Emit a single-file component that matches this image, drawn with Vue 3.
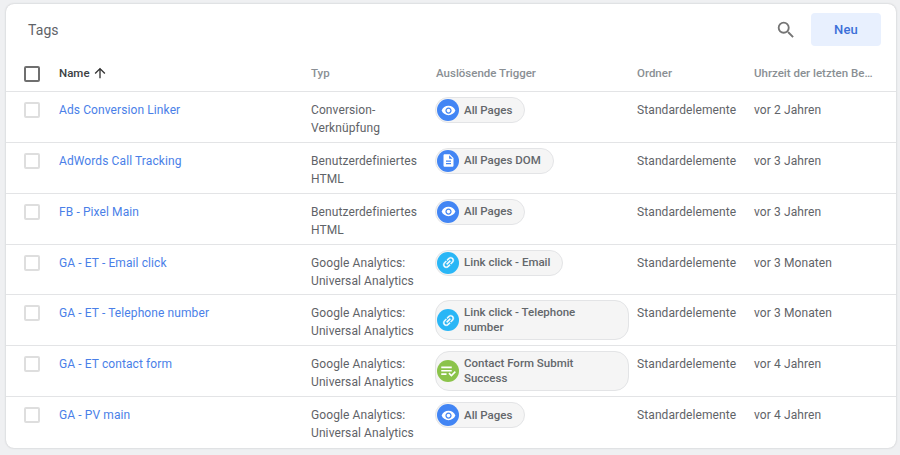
<template>
  <div class="page">
    <div class="card">
      <div class="toolbar">
        <div class="heading">Tags</div>
        <div class="actions">
          <svg class="search" viewBox="0 0 24 24" width="22" height="22">
            <path fill="#757575" d="M15.5 14h-.79l-.28-.27A6.47 6.47 0 0 0 16 9.5 6.5 6.5 0 1 0 9.5 16c1.61 0 3.09-.59 4.23-1.57l.27.28v.79l5 4.99L20.49 19l-4.99-5zm-6 0C7.01 14 5 11.99 5 9.5S7.01 5 9.5 5 14 7.01 14 9.5 11.99 14 9.5 14z" />
          </svg>
          <button class="new-btn">Neu</button>
        </div>
      </div>

      <div class="row head">
        <div class="check-cell"><span class="box box-head"></span></div>
        <div class="name-head">
          Name
          <svg viewBox="0 0 24 24" width="16" height="16">
            <path fill="#333" d="M4 12l1.41 1.41L11 7.83V20h2V7.83l5.58 5.59L20 12l-8-8-8 8z" />
          </svg>
        </div>
        <div>Typ</div>
        <div>Auslösende Trigger</div>
        <div>Ordner</div>
        <div class="ellipsis">Uhrzeit der letzten Bearbeitung</div>
      </div>

      <div v-for="tag in tags" :key="tag.name" class="row">
        <div class="check-cell"><span class="box"></span></div>
        <a class="name">{{ tag.name }}</a>
        <div class="type">{{ tag.type }}</div>
        <div>
          <div class="chip">
            <span class="chip-icon" :class="tag.icon">
              <svg v-if="tag.icon === 'eye'" viewBox="0 0 24 24" width="15" height="15">
                <path fill="#fff" d="M12 4.500C7 4.500 2.730 7.610 1 12c1.730 4.390 6 7.500 11 7.500s9.270-3.110 11-7.500c-1.730-4.390-6-7.500-11-7.500zM12 17c-2.760 0-5-2.240-5-5s2.240-5 5-5 5 2.240 5 5-2.240 5-5 5zm0-8c-1.660 0-3 1.340-3 3s1.340 3 3 3 3-1.340 3-3-1.340-3-3-3z" />
              </svg>
              <svg v-else-if="tag.icon === 'doc'" viewBox="0 0 24 24" width="15" height="15">
                <path fill="#fff" d="M14 2H6c-1.100 0-2 .9-2 2v16c0 1.100.9 2 2 2h12c1.100 0 2-.9 2-2V8l-6-6zm2 16H8v-2h8v2zm0-4H8v-2h8v2zm-3-5V3.500L18.500 9H13z" />
              </svg>
              <svg v-else-if="tag.icon === 'link'" viewBox="0 0 24 24" width="15" height="15" class="tilt">
                <path fill="#fff" stroke="#fff" stroke-width="0.6" d="M3.900 12c0-1.710 1.390-3.100 3.100-3.100h4V7H7c-2.760 0-5 2.240-5 5s2.240 5 5 5h4v-1.900H7c-1.710 0-3.100-1.390-3.100-3.100zM8 13h8v-2H8v2zm9-6h-4v1.900h4c1.710 0 3.100 1.390 3.100 3.100s-1.390 3.100-3.100 3.100h-4V17h4c2.760 0 5-2.240 5-5s-2.240-5-5-5z" />
              </svg>
              <svg v-else viewBox="0 0 24 24" width="18" height="18">
                <path fill="#fff" d="M3 6h14v2.200H3zM3 10.500h14v2.200H3zM3 15h7v2.200H3zM12.500 15.500l1.500-1.500 2.500 2.500 4.500-4.500 1.500 1.500-6 6z" />
              </svg>
            </span>
            <span class="chip-label">{{ tag.trigger }}</span>
          </div>
        </div>
        <div>Standardelemente</div>
        <div>{{ tag.time }}</div>
      </div>
    </div>
  </div>
</template>

<script setup>
const custom = "Benutzerdefiniertes HTML";
const ua = "Google Analytics: Universal Analytics";

const tags = [
  { name: "Ads Conversion Linker", type: "Conversion-Verknüpfung", trigger: "All Pages", icon: "eye", time: "vor 2 Jahren" },
  { name: "AdWords Call Tracking", type: custom, trigger: "All Pages DOM", icon: "doc", time: "vor 3 Jahren" },
  { name: "FB - Pixel Main", type: custom, trigger: "All Pages", icon: "eye", time: "vor 3 Jahren" },
  { name: "GA - ET - Email click", type: ua, trigger: "Link click - Email", icon: "link", time: "vor 3 Monaten" },
  { name: "GA - ET - Telephone number", type: ua, trigger: "Link click - Telephone number", icon: "link", time: "vor 3 Monaten" },
  { name: "GA - ET contact form", type: ua, trigger: "Contact Form Submit Success", icon: "form", time: "vor 4 Jahren" },
  { name: "GA - PV main", type: ua, trigger: "All Pages", icon: "eye", time: "vor 4 Jahren" },
];
</script>

<style>
html,
body {
  margin: 0;
  background: #eff0f2;
}
</style>

<style scoped>
.page {
  width: 900px;
  height: 455px;
  padding: 4px 4px 0 6px;
  box-sizing: border-box;
  font-family: Roboto, "Liberation Sans", sans-serif;
  font-size: 12px;
  letter-spacing: 0.1px;
  color: #5f6368;
  overflow: hidden;
}

.card {
  height: 444px;
  background: #fff;
  border-radius: 8px;
  box-shadow: 0 0 2px rgba(60, 64, 67, 0.3);
  overflow: hidden;
}

.toolbar {
  height: 51px;
  display: flex;
  align-items: center;
  justify-content: space-between;
  padding: 0 15px 0 22px;
}

.heading {
  font-size: 14px;
  color: #5f6368;
}

.actions {
  display: flex;
  align-items: center;
  gap: 14px;
}

.search {
  display: block;
}

.new-btn {
  width: 70px;
  height: 33px;
  border: none;
  border-radius: 4px;
  background: #e8f0fe;
  color: #3b6fd8;
  font: 500 13px Roboto, sans-serif;
  letter-spacing: 0.2px;
}

.row {
  display: grid;
  grid-template-columns: 53px 252px 125px 201px 117px 142px;
  border-top: 1px solid #e3e4e6;
  padding-top: 9px;
  height: 40.85px;
  line-height: 18px;
}

.head {
  border-top: none;
  height: 19px;
  padding-top: 9px;
  padding-bottom: 8px;
  font-size: 11.5px;
  font-weight: 500;
  letter-spacing: 0;
  color: #8a8f94;
}

.check-cell {
  padding-left: 18px;
}

.box {
  display: block;
  width: 12px;
  height: 12px;
  border: 2px solid #dedede;
  border-radius: 2px;
  margin-top: 1px;
}

.box-head {
  border-color: #6f6f6f;
  margin-top: 2px;
}

.name-head {
  display: flex;
  align-items: center;
  gap: 2px;
  color: #3c4043;
  height: 18px;
}

.name {
  color: #4a7fe8;
}

.type {
  width: 118px;
}

.ellipsis {
  overflow: hidden;
  white-space: nowrap;
  text-overflow: ellipsis;
  padding-right: 22px;
}

.chip {
  display: inline-flex;
  align-items: center;
  box-sizing: border-box;
  max-width: 194px;
  min-height: 26px;
  margin: -4px 0 0 -1px;
  padding: 0 12px 0 1px;
  border: 1px solid #e3e4e6;
  border-radius: 14px;
  background: #f5f5f5;
  font-weight: 500;
  font-size: 11.5px;
  line-height: 15px;
  letter-spacing: 0;
  color: #63676b;
}

.chip-label {
  padding: 4px 0;
  margin-left: 5px;
}

.chip-icon {
  flex: none;
  width: 22px;
  height: 22px;
  border-radius: 50%;
  display: flex;
  align-items: center;
  justify-content: center;
}

.eye,
.doc {
  background: #4285f4;
}

.link {
  background: #29b6f6;
}

.form {
  background: #8bc34a;
}

.tilt {
  transform: rotate(-45deg);
}
</style>
